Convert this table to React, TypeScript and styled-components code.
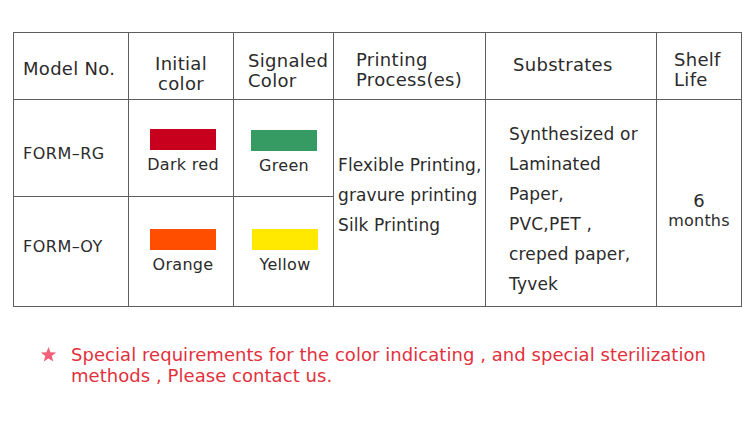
import React from 'react'
import styled, { createGlobalStyle } from 'styled-components'

const GlobalStyle = createGlobalStyle`
    html, body {
        margin: 0;
        padding: 0;
        background: #fff;
    }
    body {
        width: 750px;
        height: 446px;
        overflow: hidden;
        font-family: 'DejaVu Sans', 'Liberation Sans', sans-serif;
        color: #2b2b2b;
    }
`

const Page = styled.div`
    padding: 32px 0 0 13px;
    display: flex;
    flex-direction: column;
`

const Table = styled.table`
    border-collapse: collapse;
    table-layout: fixed;
    width: 728px;
    td,
    th {
        border: 1px solid #5e5e5e;
        padding: 0;
        font-weight: normal;
        vertical-align: middle;
    }
`

const Row = styled.tr<{ $h: number }>`
    height: ${(p) => p.$h}px;
`

// $dy moves the content down (positive) or up (negative) inside the cell
const Head = styled.th<{ $align?: string; $pad?: number; $dy?: number }>`
    font-size: 18px;
    line-height: 20px;
    letter-spacing: 0.3px;
    text-align: ${(p) => p.$align || 'left'};
    padding-left: ${(p) => p.$pad || 0}px !important;
    padding-top: ${(p) => Math.max(0, (p.$dy || 0) * 2)}px !important;
    padding-bottom: ${(p) => Math.max(0, -(p.$dy || 0) * 2)}px !important;
`

const Cell = styled.td<{ $align?: string; $pad?: number; $dy?: number }>`
    font-size: 16px;
    letter-spacing: 0.5px;
    text-align: ${(p) => p.$align || 'left'};
    padding-left: ${(p) => p.$pad || 0}px !important;
    padding-top: ${(p) => Math.max(0, (p.$dy || 0) * 2)}px !important;
    padding-bottom: ${(p) => Math.max(0, -(p.$dy || 0) * 2)}px !important;
`

const Swatch = styled.div<{ $color: string; $dx: number }>`
    display: flex;
    flex-direction: column;
    align-items: center;
    margin-left: ${(p) => p.$dx}px;
    width: 66px;
    gap: 5px;
    font-size: 16px;
    letter-spacing: 0.3px;
    white-space: nowrap;
    &::before {
        content: '';
        width: 66px;
        height: 21px;
        background: ${(p) => p.$color};
    }
`

const Lines = styled.div<{ $size: number; $ls: number }>`
    display: flex;
    flex-direction: column;
    font-size: ${(p) => p.$size}px;
    line-height: 30px;
    letter-spacing: ${(p) => p.$ls}px;
    white-space: nowrap;
`

const Shelf = styled.div`
    display: flex;
    flex-direction: column;
    align-items: center;
    font-size: 16px;
    line-height: 20px;
    letter-spacing: 0.2px;
    span:first-child {
        font-size: 18px;
    }
`

const Note = styled.div`
    margin-top: 37px;
    padding-left: 27px;
    display: flex;
    gap: 14px;
    color: #e2313c;
    font-size: 18px;
    line-height: 21px;
    letter-spacing: 0.05px;
    svg {
        flex: none;
        margin-top: 3px;
    }
`

function Star(): JSX.Element {
    return (
        <svg width="17" height="16" viewBox="0 0 24 23">
            <path
                d="M12 0l2.9 7.6 8.1.4-6.3 5.1 2.2 7.9L12 16.5 5.1 21l2.2-7.9L1 8l8.1-.4z"
                fill="#f2607a"
            />
        </svg>
    )
}

export default function App(): JSX.Element {
    return (
        <>
            <GlobalStyle />
            <Page>
                <Table>
                    <colgroup>
                        <col style={{ width: 115 }} />
                        <col style={{ width: 105 }} />
                        <col style={{ width: 100 }} />
                        <col style={{ width: 152 }} />
                        <col style={{ width: 171 }} />
                        <col style={{ width: 85 }} />
                    </colgroup>
                    <thead>
                        <Row $h={67}>
                            <Head $pad={9} $dy={3}>
                                Model No.
                            </Head>
                            <Head $align="center" $dy={8}>
                                Initial
                                <br />
                                color
                            </Head>
                            <Head $pad={14} $dy={5}>
                                Signaled
                                <br />
                                Color
                            </Head>
                            <Head $pad={22} $dy={4}>
                                Printing
                                <br />
                                Process(es)
                            </Head>
                            <Head $pad={27} $dy={-1}>
                                Substrates
                            </Head>
                            <Head $pad={17} $dy={4}>
                                Shelf
                                <br />
                                Life
                            </Head>
                        </Row>
                    </thead>
                    <tbody>
                        <Row $h={97}>
                            <Cell $pad={9} $dy={5}>
                                FORM–RG
                            </Cell>
                            <Cell $dy={3}>
                                <Swatch $color="#c8001e" $dx={21}>
                                    Dark red
                                </Swatch>
                            </Cell>
                            <Cell $dy={4}>
                                <Swatch $color="#369a63" $dx={17}>
                                    Green
                                </Swatch>
                            </Cell>
                            <Cell rowSpan={2} $pad={4} $dy={-8}>
                                <Lines $size={17} $ls={0.1}>
                                    <span>Flexible Printing,</span>
                                    <span>gravure printing</span>
                                    <span>Silk Printing</span>
                                </Lines>
                            </Cell>
                            <Cell rowSpan={2} $pad={23} $dy={6}>
                                <Lines $size={17} $ls={0.2}>
                                    <span>Synthesized or</span>
                                    <span>Laminated</span>
                                    <span>Paper,</span>
                                    <span>PVC,PET ,</span>
                                    <span>creped paper,</span>
                                    <span>Tyvek</span>
                                </Lines>
                            </Cell>
                            <Cell rowSpan={2} $dy={8}>
                                <Shelf>
                                    <span>6</span>
                                    <span>months</span>
                                </Shelf>
                            </Cell>
                        </Row>
                        <Row $h={110}>
                            <Cell $pad={9} $dy={-5}>
                                FORM–OY
                            </Cell>
                            <Cell>
                                <Swatch $color="#ff4e00" $dx={21}>
                                    Orange
                                </Swatch>
                            </Cell>
                            <Cell>
                                <Swatch $color="#ffe900" $dx={18}>
                                    Yellow
                                </Swatch>
                            </Cell>
                        </Row>
                    </tbody>
                </Table>
                <Note>
                    <Star />
                    <span>
                        Special requirements for the color indicating , and
                        special sterilization
                        <br />
                        methods , Please contact us.
                    </span>
                </Note>
            </Page>
        </>
    )
}
